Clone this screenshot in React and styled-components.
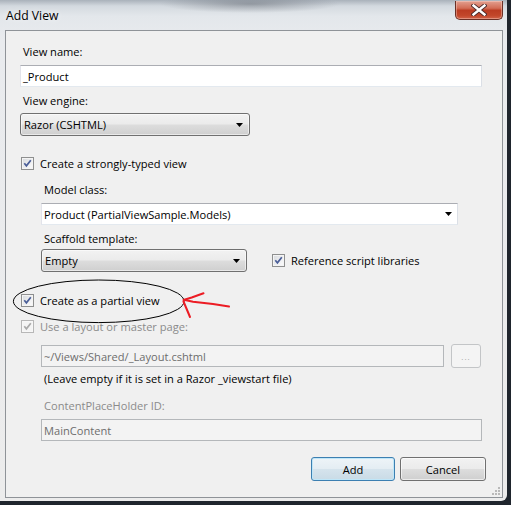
import React from 'react';
import styled, { createGlobalStyle } from 'styled-components';

const GlobalStyle = createGlobalStyle`
  html, body { margin: 0; padding: 0; background: #1f252d; }
  body {
    width: 511px; height: 505px; overflow: hidden;
    font-family: "Open Sans", "Noto Sans", sans-serif;
    font-size: 11.1px; color: #000;
  }
`;

const Window = styled.div`
  width: 507px;
  height: 501px;
  display: flex;
  flex-direction: column;
  box-sizing: border-box;
  border-bottom-right-radius: 6px;
  background: linear-gradient(180deg, #a9b1ba 0px, #d3d9df 6px, #e3e7eb 16px, #e9ebee 40px, #ececec 100%);
`;

const TitleBar = styled.div`
  height: 30px;
  flex-shrink: 0;
  display: flex;
  align-items: flex-start;
  justify-content: space-between;
  padding: 0 4px 0 6px;
  background: radial-gradient(ellipse 90px 9px at 250px 4px, rgba(70,76,86,0.4), rgba(70,76,86,0));
`;

const Title = styled.div`
  margin-top: 8px;
  font-size: 12.2px;
  line-height: 16px;
  color: #000;
  text-shadow: 0 0 6px rgba(255,255,255,0.9);
`;

const CloseButton = styled.div`
  margin-top: 1px;
  width: 48px;
  height: 19px;
  box-sizing: border-box;
  border: 1px solid #6a3026;
  border-top: none;
  border-radius: 0 0 5px 5px;
  background: linear-gradient(180deg, #e3a090 0%, #d26c55 40%, #bb3c22 52%, #c2462a 80%, #d06248 100%);
  box-shadow: inset 0 0 0 1px rgba(255,220,210,0.4);
  display: flex;
  align-items: center;
  justify-content: center;
`;

const Client = styled.div`
  flex: 1;
  margin: 0 4px 3px 5px;
  border: 1px solid #8f9398;
  background: #f0f0f0;
  position: relative;
  padding: 13px 20px 0 14px;
  display: flex;
  flex-direction: column;
`;

const Label = styled.div`
  margin-left: 3px;
  margin-top: ${p => p.$mt || 0}px;
  line-height: 15px;
  height: 15px;
  white-space: nowrap;
  color: ${p => (p.$disabled ? '#8b8b8b' : '#000')};
`;

const TextBox = styled.div`
  margin-top: ${p => p.$mt || 0}px;
  width: ${p => (p.$w ? `${p.$w}px` : 'auto')};
  height: 22px;
  box-sizing: border-box;
  border: 1px solid;
  border-color: ${p => (p.$disabled ? '#b4b7ba' : '#abadb3 #dbdfe6 #e3e9ef #e2e3ea')};
  background: ${p => (p.$disabled ? '#f3f3f3' : '#fff')};
  color: ${p => (p.$disabled ? '#6d6d6d' : '#000')};
  padding: 0 5px 0 2px;
  display: flex;
  align-items: center;
  justify-content: space-between;
  white-space: nowrap;
  flex-shrink: 0;
`;

const DropDown = styled.div`
  margin-top: ${p => p.$mt || 0}px;
  width: ${p => p.$w}px;
  height: 23px;
  box-sizing: border-box;
  border: 1px solid #707070;
  border-radius: 3px;
  background: linear-gradient(180deg, #f2f2f2 0%, #ebebeb 48%, #dddddd 52%, #cfcfcf 100%);
  box-shadow: inset 0 0 0 1px rgba(255,255,255,0.55);
  padding: 0 6px 0 3px;
  display: flex;
  align-items: center;
  justify-content: space-between;
  white-space: nowrap;
  flex-shrink: 0;
`;

const CheckRow = styled.div`
  margin-top: ${p => p.$mt || 0}px;
  margin-left: ${p => (p.$ml === undefined ? 1 : p.$ml)}px;
  height: 16px;
  display: flex;
  align-items: center;
  gap: 6px;
  white-space: nowrap;
  color: ${p => (p.$disabled ? '#8b8b8b' : '#000')};
`;

const Box = styled.span`
  width: 13px;
  height: 13px;
  box-sizing: border-box;
  flex-shrink: 0;
  border: 1px solid ${p => (p.$disabled ? '#b7b7b7' : '#8e8f8f')};
  background: ${p => (p.$disabled ? '#f4f4f4' : 'linear-gradient(135deg, #d6d9dd 0%, #f7f7f8 80%)')};
  box-shadow: inset 0 0 0 1px ${p => (p.$disabled ? '#f7f7f7' : '#f4f4f4')};
  display: flex;
  align-items: center;
  justify-content: center;
`;

const Indent = styled.div`
  padding-left: 21px;
  display: flex;
  flex-direction: column;
`;

const Row = styled.div`
  margin-top: ${p => p.$mt || 0}px;
  display: flex;
  align-items: center;
  gap: ${p => p.$gap || 0}px;
`;

const SmallButton = styled.div`
  width: 30px;
  height: 24px;
  box-sizing: border-box;
  border: 1px solid #c3c5c7;
  border-radius: 3px;
  background: #f4f4f4;
  color: #a4a4a4;
  font-size: 8px;
  display: flex;
  align-items: flex-end;
  justify-content: center;
  padding-bottom: 5px;
  letter-spacing: 1px;
`;

const ButtonRow = styled.div`
  margin-top: 16px;
  margin-right: -4px;
  display: flex;
  justify-content: flex-end;
  gap: 5px;
`;

const Button = styled.div`
  width: ${p => p.$w}px;
  height: 24px;
  box-sizing: border-box;
  border: 1px solid ${p => (p.$primary ? '#3c7fb1' : '#707070')};
  border-radius: 3px;
  background: ${p =>
    p.$primary
      ? 'linear-gradient(180deg, #eef4f8 0%, #e4edf3 48%, #d5e3ec 52%, #c9dbe6 100%)'
      : 'linear-gradient(180deg, #f2f2f2 0%, #ebebeb 48%, #dddddd 52%, #cfcfcf 100%)'};
  box-shadow: inset 0 0 0 1px ${p => (p.$primary ? '#bfe6f8' : 'rgba(255,255,255,0.6)')};
  display: flex;
  align-items: center;
  justify-content: center;
  color: #000;
`;

const Annotation = styled.svg`
  position: absolute;
  left: 0;
  top: 240px;
  pointer-events: none;
  overflow: visible;
`;

const Grip = styled.svg`
  position: absolute;
  right: 1px;
  bottom: 1px;
`;

const Arrow = () => (
  <svg width="7" height="4" viewBox="0 0 7 4">
    <path d="M0 0 H7 L3.5 4 Z" fill="#000" />
  </svg>
);

const Check = ({ disabled }) => (
  <Box $disabled={disabled}>
    <svg width="9" height="9" viewBox="0 0 9 9">
      <path
        d="M1.3 4.3 L3.4 6.8 L7.8 1.2"
        fill="none"
        stroke={disabled ? '#a9a9a9' : '#4a5e98'}
        strokeWidth="1.7"
      />
    </svg>
  </Box>
);

export default function App() {
  return (
    <>
      <GlobalStyle />
      <Window>
        <TitleBar>
          <Title>Add View</Title>
          <CloseButton>
            <svg width="16" height="12" viewBox="0 0 16 12">
              <path
                d="M2.5 1.5 L13.5 10.5 M13.5 1.5 L2.5 10.5"
                stroke="#4a2a2a"
                strokeWidth="4.2"
                strokeLinecap="square"
              />
              <path
                d="M2.5 1.5 L13.5 10.5 M13.5 1.5 L2.5 10.5"
                stroke="#fff"
                strokeWidth="2.4"
                strokeLinecap="square"
              />
            </svg>
          </CloseButton>
        </TitleBar>
        <Client>
          <Label>View name:</Label>
          <TextBox $mt={6} $w={462}>_Product</TextBox>
          <Label $mt={6}>View engine:</Label>
          <DropDown $mt={5} $w={230}>
            <span>Razor (CSHTML)</span>
            <Arrow />
          </DropDown>
          <CheckRow $mt={19}>
            <Check />
            <span>Create a strongly-typed view</span>
          </CheckRow>
          <Indent>
            <Label $mt={11}>Model class:</Label>
            <TextBox $mt={6} $w={417}>
              <span>Product (PartialViewSample.Models)</span>
              <Arrow />
            </TextBox>
            <Label $mt={6}>Scaffold template:</Label>
            <Row $mt={3} $gap={25}>
              <DropDown $w={206}>
                <span>Empty</span>
                <Arrow />
              </DropDown>
              <CheckRow $ml={0}>
                <Check />
                <span>Reference script libraries</span>
              </CheckRow>
            </Row>
          </Indent>
          <CheckRow $mt={20}>
            <Check />
            <span>Create as a partial view</span>
          </CheckRow>
          <CheckRow $mt={10} $disabled>
            <Check disabled />
            <span>Use a layout or master page:</span>
          </CheckRow>
          <Indent>
            <Row $mt={10} $gap={7}>
              <TextBox $w={403} $disabled>~/Views/Shared/_Layout.cshtml</TextBox>
              <SmallButton>...</SmallButton>
            </Row>
            <Label $mt={3}>(Leave empty if it is set in a Razor _viewstart file)</Label>
            <Label $mt={12} $disabled>ContentPlaceHolder ID:</Label>
            <TextBox $mt={6} $w={441} $disabled>MainContent</TextBox>
          </Indent>
          <ButtonRow>
            <Button $primary $w={84}>Add</Button>
            <Button $w={86}>Cancel</Button>
          </ButtonRow>
          <Annotation width="240" height="60" viewBox="6 271 240 60">
            <ellipse cx="98.7" cy="301.3" rx="85.3" ry="21.3" fill="none" stroke="#000" strokeWidth="1" />
            <path
              d="M185 300 L193 301.7 L213 304 L229 306.5"
              fill="none"
              stroke="#ec1c24"
              strokeWidth="2"
              strokeLinecap="round"
            />
            <path
              d="M183.5 300 L191.7 297.5 L203.5 293.3"
              fill="none"
              stroke="#ec1c24"
              strokeWidth="2"
              strokeLinecap="round"
            />
            <path
              d="M183.5 301.5 L190 317"
              fill="none"
              stroke="#ec1c24"
              strokeWidth="2"
              strokeLinecap="round"
            />
          </Annotation>
          <Grip width="10" height="10" viewBox="0 0 10 10">
            <g fill="#b9b9b9">
              <rect x="7" y="1" width="2" height="2" />
              <rect x="4" y="4" width="2" height="2" />
              <rect x="7" y="4" width="2" height="2" />
              <rect x="1" y="7" width="2" height="2" />
              <rect x="4" y="7" width="2" height="2" />
              <rect x="7" y="7" width="2" height="2" />
            </g>
          </Grip>
        </Client>
      </Window>
    </>
  );
}
